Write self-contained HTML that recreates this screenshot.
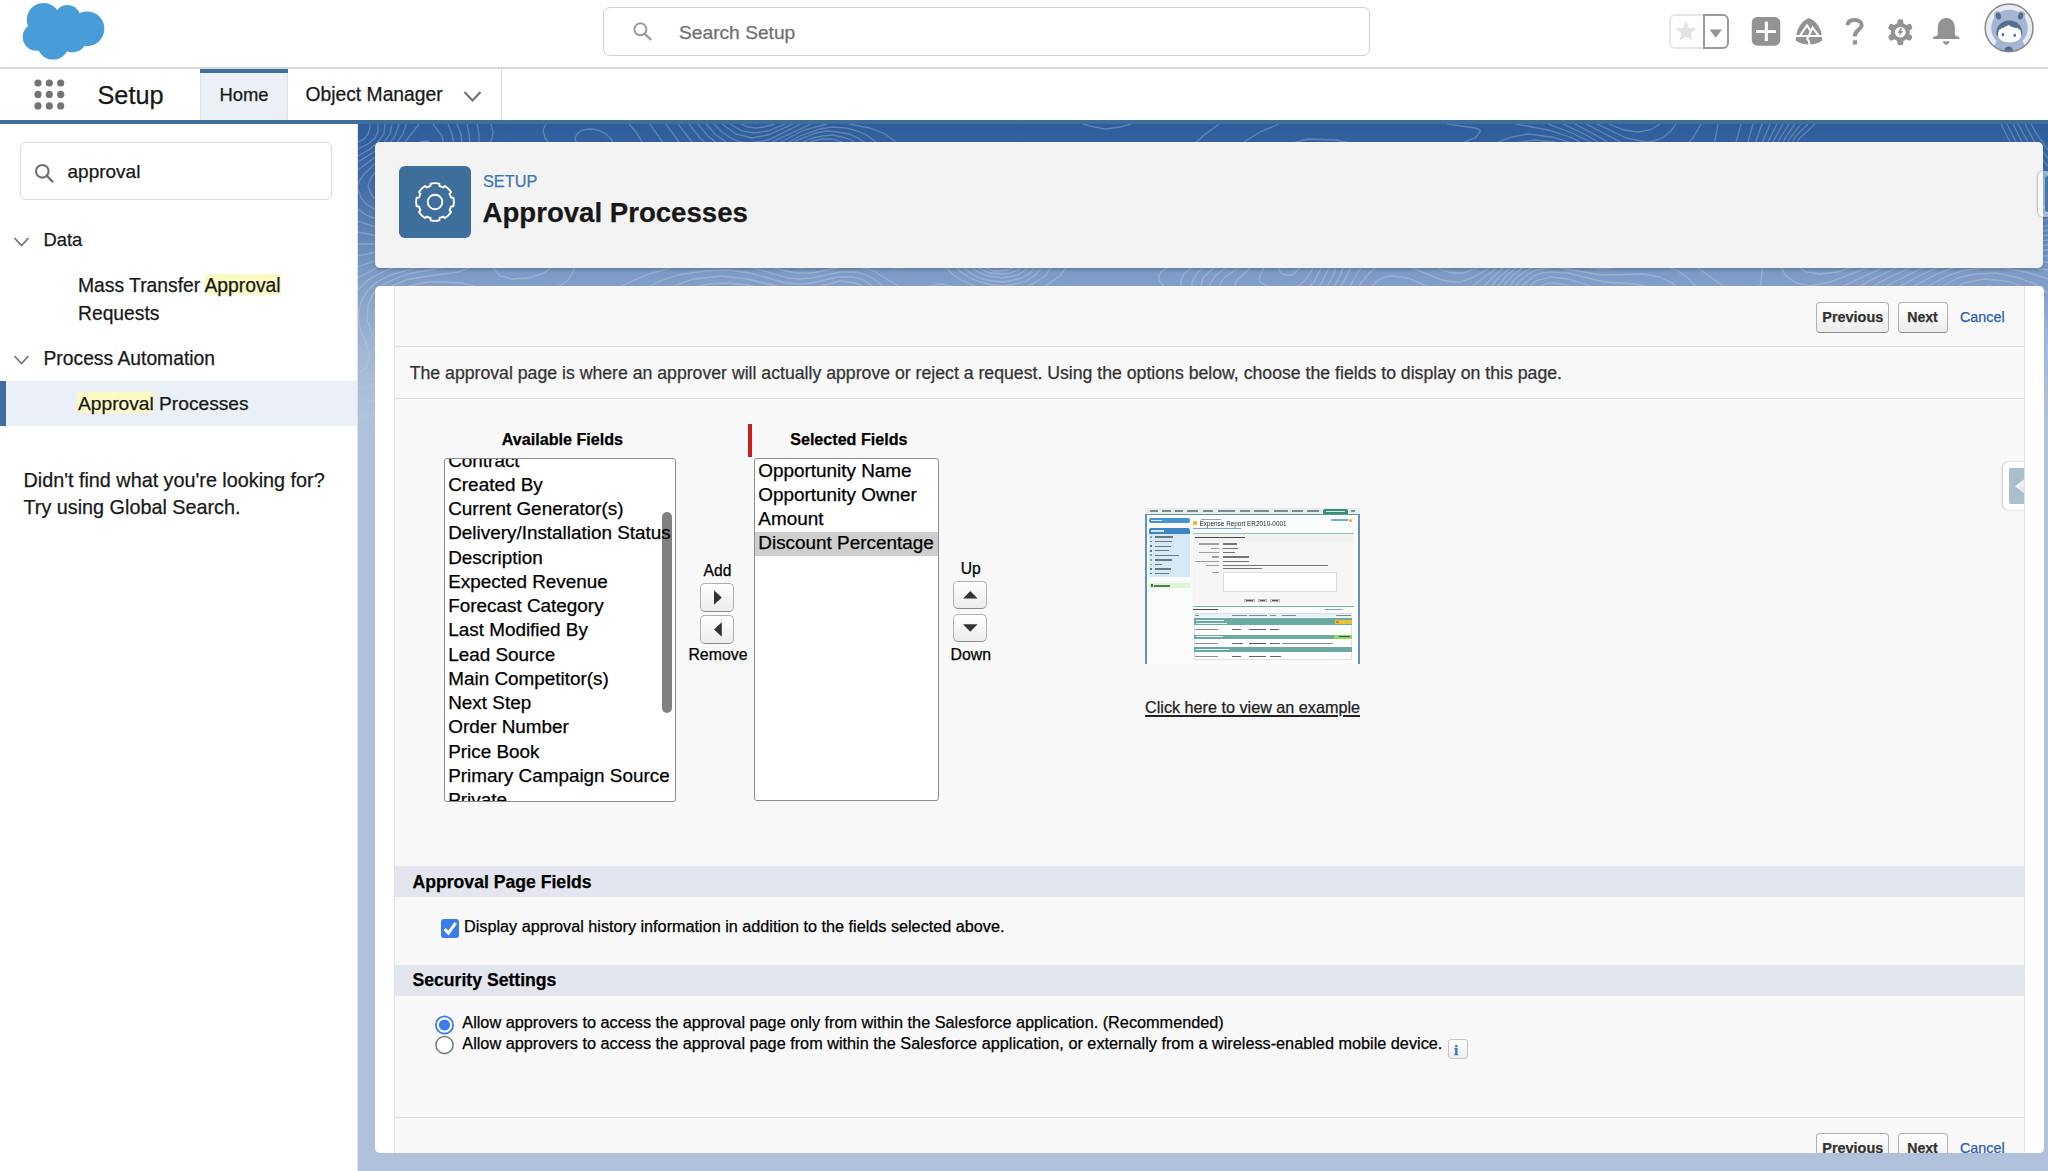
<!DOCTYPE html>
<html><head><meta charset="utf-8">
<style>
*{box-sizing:border-box;margin:0;padding:0}
html,body{width:2048px;height:1171px;overflow:hidden;background:#fff;font-family:"Liberation Sans",sans-serif;color:#181818}
.a{position:absolute}
.t{position:absolute;white-space:nowrap;line-height:1;-webkit-text-stroke:0.25px currentColor}
#hdr{left:0;top:0;width:2048px;height:69px;background:#fff;border-bottom:2px solid #d8d8d8}
#nav{left:0;top:69px;width:2048px;height:51px;background:#fff}
#navbar{left:0;top:120px;width:2048px;height:4px;background:#3d6e9c}
#side{left:0;top:124px;width:358px;height:1047px;background:#fff;border-right:1px solid #e1e1e1}
#bg{left:358px;top:124px;width:1690px;height:1047px;background:linear-gradient(180deg,#2e5d9b 0px,#3f6ba6 60px,#7d9bc6 150px,#a3b7d6 230px,#b0c1dc 290px,#b0c1dc 100%)}
#hcard{left:375px;top:142px;width:1668px;height:126px;background:#f3f3f3;border-radius:5px;box-shadow:0 2px 3px rgba(0,0,0,.18)}
#mcard{left:375px;top:286px;width:1669px;height:867px;background:#fff;border-radius:5px 5px 5px 5px;overflow:hidden}
#inner{left:19px;top:0;width:1631px;height:867px;background:#f8f8f8;border-left:1px solid #e3e3e3;border-right:1px solid #e3e3e3}
.hl{background:#fbf9c4}
.btn{position:absolute;border:1.3px solid #b0b0b0;border-bottom-color:#8a8a8a;border-radius:4px;background:linear-gradient(#fff,#ececec)}
.lbox{position:absolute;background:#fff;border:1.5px solid #8e8e8e;border-radius:3px;overflow:hidden}
.opt{position:absolute;left:3px;white-space:nowrap;font-size:18.9px;line-height:1;color:#000;-webkit-text-stroke:0.25px #000}
</style></head><body>

<!-- HEADER -->
<div id="hdr" class="a"></div>
<svg class="a" style="left:0;top:0" width="120" height="66" viewBox="0 0 120 66">
 <g fill="#489dd9">
  <circle cx="43.5" cy="19.7" r="16.8"/>
  <circle cx="67.4" cy="18.3" r="13.2"/>
  <circle cx="87.1" cy="28.7" r="17.3"/>
  <circle cx="36.4" cy="37" r="13.7"/>
  <circle cx="53" cy="43.6" r="16"/>
  <circle cx="72.2" cy="37.5" r="15"/>
  <rect x="36" y="22" width="52" height="24"/>
 </g>
</svg>
<div class="a" style="left:602.5px;top:7px;width:767px;height:48.5px;border:1.7px solid #d0d0d0;border-radius:7px;background:#fff"></div>
<svg class="a" style="left:630px;top:20px" width="26" height="24" viewBox="0 0 26 24"><circle cx="10.4" cy="9.3" r="6" fill="none" stroke="#9b9b9b" stroke-width="1.9"/><line x1="14.8" y1="13.8" x2="20.6" y2="19.3" stroke="#9b9b9b" stroke-width="2.3" stroke-linecap="round"/></svg>
<div class="t" style="left:679px;top:22.70px;font-size:19.2px;color:#6f6f6f">Search Setup</div>

<!-- NAV -->
<div id="nav" class="a"></div>
<div id="navbar" class="a"></div>

<!-- header icons -->
<div class="a" style="left:1669px;top:14px;width:35px;height:35px;border:2px solid #e6e6e6;border-right:none;border-radius:6px 0 0 6px;background:#fff"></div>
<div class="a" style="left:1703px;top:14px;width:26px;height:35px;border:2px solid #9a9a9a;border-radius:0 6px 6px 0;background:#fff"></div>
<svg class="a" style="left:1674px;top:19px" width="24" height="24" viewBox="0 0 24 24"><polygon fill="#e2e2e2" points="12,1.5 14.9,8.9 22.6,9.2 16.6,14.2 18.7,22 12,17.5 5.3,22 7.4,14.2 1.4,9.2 9.1,8.9"/></svg>
<svg class="a" style="left:1709px;top:29px" width="14" height="10" viewBox="0 0 14 10"><polygon fill="#939393" points="0.5,0.5 13,0.5 6.75,8.8"/></svg>
<svg class="a" style="left:1751px;top:16px" width="30" height="31" viewBox="0 0 30 31"><rect x="0.8" y="1" width="28.5" height="28.7" rx="5.5" fill="#939393"/><rect x="13.8" y="5.6" width="3.1" height="19.5" fill="#fff"/><rect x="5" y="14.1" width="19.9" height="2.9" fill="#fff"/></svg>
<svg class="a" style="left:1794px;top:17px" width="30" height="30" viewBox="0 0 30 30"><path fill="#939393" d="M14.9 1.1 C 21 3.5 27 9.5 28 20 L 28.2 23.5 C 25 26 20 27.4 14.9 27.4 C 9.8 27.4 5 26 1.8 23.5 L 2 20 C 3 9.5 9 3.5 14.9 1.1 Z"/><g fill="none" stroke="#fff" stroke-width="2"><path d="M6.2 18.2 L13 8.4 L16.8 14.4"/><path d="M15.2 18.2 L18.6 10.4 L24.2 18.2"/><path d="M0 19 H30"/><path d="M14.2 19.5 L13.3 22 L14.9 24.5 L15.7 28.5"/></g></svg>
<svg class="a" style="left:1844px;top:17px" width="22" height="30" viewBox="0 0 22 30"><path fill="none" stroke="#939393" stroke-width="4" d="M3.6 8.3 C 3.6 4.2 6.8 2.9 10.8 2.9 C 15 2.9 17.7 5.2 17.7 8.3 C 17.7 12.2 11 13.2 11 18.3 L 11 19.6"/><rect x="8.8" y="23.3" width="4.2" height="4.3" fill="#939393"/></svg>
<svg class="a" style="left:1886px;top:17px" width="29" height="30" viewBox="0 0 29 30"><g transform="translate(14.3,15.2)"><g fill="#939393">
 <circle r="9.4"/>
 <rect x="-3" y="-13" width="6" height="6" rx="2.2"/>
 <rect x="-3" y="-13" width="6" height="6" rx="2.2" transform="rotate(60)"/>
 <rect x="-3" y="-13" width="6" height="6" rx="2.2" transform="rotate(120)"/>
 <rect x="-3" y="-13" width="6" height="6" rx="2.2" transform="rotate(180)"/>
 <rect x="-3" y="-13" width="6" height="6" rx="2.2" transform="rotate(240)"/>
 <rect x="-3" y="-13" width="6" height="6" rx="2.2" transform="rotate(300)"/>
 </g><circle r="5.4" fill="#fff"/><path fill="#939393" d="M0.2 -3.9 L -2.7 0.9 L -0.4 0.9 L -1.3 4 L 3.1 -1.2 L 0.6 -1.2 L 1.9 -3.9 Z"/></g></svg>
<svg class="a" style="left:1931px;top:17px" width="30" height="30" viewBox="0 0 30 30"><path fill="#939393" d="M15.3 1 C 20.8 1 23.9 5.5 23.9 11 L 23.9 17 C 23.9 18.5 25.3 19.2 27.3 19.8 C 28.9 20.3 28.9 22 27.3 22 L 3 22 C 1.4 22 1.4 20.3 3 19.8 C 5 19.2 6.8 18.5 6.8 17 L 6.8 11 C 6.8 5.5 9.8 1 15.3 1 Z"/><path fill="#939393" d="M11.9 24.2 L 18.5 24.2 C 18 26.5 16.8 27.7 15.2 27.7 C 13.6 27.7 12.4 26.5 11.9 24.2 Z"/></svg>
<svg class="a" style="left:1983px;top:2px" width="52" height="52" viewBox="0 0 52 52">
 <defs><clipPath id="av"><circle cx="26.1" cy="25.9" r="23.6"/></clipPath></defs>
 <circle cx="26.1" cy="25.9" r="23.6" fill="#e8ebf1"/>
 <g clip-path="url(#av)">
  <circle cx="26.5" cy="26" r="18.3" fill="#a3b5d3"/>
  <path fill="#a3b5d3" d="M11 12 C 12 9.5 14 8.5 16 9.3 L 21 13 L 32 13 L 37 9.3 C 39 8.5 41 9.5 42 12 L 42 22 L 11 22 Z"/>
  <path fill="#a3b5d3" d="M14 38 L 39 38 L 46 52 L 7 52 Z"/>
  <ellipse cx="15.4" cy="14" rx="2.6" ry="3.6" fill="#566c91" transform="rotate(-12 15.4 14)"/>
  <ellipse cx="37.6" cy="14" rx="2.6" ry="3.6" fill="#566c91" transform="rotate(12 37.6 14)"/>
  <path fill="#566c91" d="M13.4 33.5 C 12.6 24 18.5 18.6 26.4 18.6 C 34.3 18.6 40 24 39.3 33.5 L 37 33.5 L 37 29 L 16 29 L 16 33.5 Z"/>
  <path fill="#fff" d="M15 32.5 C 15 37.5 19.8 40.4 26.6 40.4 C 33.4 40.4 38.3 37.5 38.3 32.5 C 38.3 30.5 37.7 29 36.8 27.6 C 35.5 27.8 35 26.5 34.5 25.3 C 33.8 26.5 33 26.8 32.2 26 C 30.5 24.8 28.5 24.3 26.5 24.4 C 27 23.6 26.6 23 26.2 22.8 C 25 23.4 23.6 24 22.2 24.6 C 21.5 25 20.8 25.5 20 26.2 C 19.6 26 19.2 25.8 18.8 25.6 C 18.6 26.8 17.4 27.6 16.2 27.8 C 15.5 29 15 30.6 15 32.5 Z"/>
  <ellipse cx="19.9" cy="32.7" rx="1.2" ry="1.8" fill="#566c91"/><ellipse cx="31.8" cy="33.2" rx="1.2" ry="1.8" fill="#566c91"/>
  <ellipse cx="25.6" cy="48.5" rx="4.4" ry="4" fill="#566c91"/>
 </g>
 <circle cx="26.1" cy="25.9" r="23.9" fill="none" stroke="#888" stroke-width="1.5"/>
</svg>

<!-- NAV content -->
<svg class="a" style="left:30px;top:75px" width="40" height="40" viewBox="0 0 40 40"><g fill="#747474">
 <circle cx="8" cy="8" r="3.6"/><circle cx="19.3" cy="8" r="3.6"/><circle cx="30.7" cy="8" r="3.6"/>
 <circle cx="8" cy="19.4" r="3.6"/><circle cx="19.3" cy="19.4" r="3.6"/><circle cx="30.7" cy="19.4" r="3.6"/>
 <circle cx="8" cy="30.9" r="3.6"/><circle cx="19.3" cy="30.9" r="3.6"/><circle cx="30.7" cy="30.9" r="3.6"/>
</g></svg>
<div class="t" style="left:97.5px;top:83.20px;font-size:25.3px;color:#181818">Setup</div>
<div class="a" style="left:200px;top:69px;width:88px;height:51px;background:#eaf0f5;border-left:1px solid #dfe3e8;border-right:1px solid #dfe3e8"></div>
<div class="a" style="left:200px;top:69px;width:88px;height:4px;background:#3d6e9c"></div>
<div class="t" style="left:219.4px;top:85.90px;font-size:18.4px;color:#181818">Home</div>
<div class="t" style="left:305.5px;top:85.00px;font-size:19.3px;color:#181818">Object Manager</div>
<svg class="a" style="left:462px;top:89px" width="21" height="15" viewBox="0 0 21 15"><polyline points="2.5,3 10.5,11.5 18.5,3" fill="none" stroke="#747474" stroke-width="2.2"/></svg>
<div class="a" style="left:501px;top:69px;width:1px;height:51px;background:#dddddd"></div>

<!-- SIDEBAR -->
<div id="side" class="a"></div>
<div class="a" style="left:20px;top:142px;width:312px;height:58px;border:1px solid #dcdcdc;border-radius:6px;background:#fff"></div>
<svg class="a" style="left:32px;top:161px" width="24" height="24" viewBox="0 0 24 24"><circle cx="10.3" cy="10.3" r="6.3" fill="none" stroke="#6f6f6f" stroke-width="2.1"/><line x1="14.8" y1="14.8" x2="20.5" y2="20.5" stroke="#6f6f6f" stroke-width="2.4" stroke-linecap="round"/></svg>
<div class="t" style="left:67.5px;top:162.20px;font-size:19px;color:#181818">approval</div>
<svg class="a" style="left:12px;top:234px" width="20" height="16" viewBox="0 0 20 16"><polyline points="2.5,4 9.5,11.5 16.5,4" fill="none" stroke="#747474" stroke-width="1.8"/></svg>
<div class="t" style="left:43.5px;top:230.90px;font-size:18.4px;color:#181818">Data</div>
<div class="a hl" style="left:204.8px;top:274.4px;width:76.4px;height:21.1px"></div>
<div class="t" style="left:78px;top:275.70px;font-size:19.3px;color:#181818">Mass Transfer Approval</div>
<div class="t" style="left:78px;top:303.50px;font-size:19.3px;color:#181818">Requests</div>
<svg class="a" style="left:12px;top:352px" width="20" height="16" viewBox="0 0 20 16"><polyline points="2.5,4 9.5,11.5 16.5,4" fill="none" stroke="#747474" stroke-width="1.8"/></svg>
<div class="t" style="left:43.5px;top:348.70px;font-size:19.3px;color:#181818">Process Automation</div>
<div class="a" style="left:0;top:381px;width:357px;height:45px;background:#eaf0f5"></div>
<div class="a" style="left:0;top:381px;width:6px;height:45px;background:#3d6e9c"></div>
<div class="a hl" style="left:77.3px;top:392px;width:76.5px;height:21.3px"></div>
<div class="t" style="left:78px;top:393.50px;font-size:19.2px;color:#181818">Approval Processes</div>
<div class="t" style="left:23.50px;top:470.80px;font-size:19.8px;color:#181818">Didn't find what you're looking for?</div>
<div class="t" style="left:23.50px;top:498.40px;font-size:19.8px;color:#181818">Try using Global Search.</div>

<!-- CONTENT BG -->
<div id="bg" class="a"></div>
<svg id="topo" class="a" style="left:358px;top:124px" width="1690" height="330" viewBox="0 0 1690 330">
<defs><linearGradient id="tg" x1="0" y1="0" x2="0" y2="1"><stop offset="0" stop-color="#fff" stop-opacity="1"/><stop offset="0.5" stop-color="#fff" stop-opacity="0.9"/><stop offset="1" stop-color="#fff" stop-opacity="0"/></linearGradient>
<mask id="tm"><rect width="1690" height="330" fill="url(#tg)"/></mask></defs>
<path mask="url(#tm)" fill="none" stroke="rgba(255,255,255,0.24)" stroke-width="1.3" d="M1457 0 1442 14 1433 28 1429 46 1430 64 1438 84 1452 101 1466 110 1484 113 1500 111 1544 100 1574 96 1656 91 1668 88 1676 84 1680 80 1683 74 1683 68 1682 62 1676 52 1655 24 1643 0M1210 204 1212 200 1212 196 1209 188 1202 182 1198 182 1194 183 1192 187 1192 192 1196 200 1204 206 1210 204M438 316 450 312 462 303 471 292 479 278 482 266 482 254 479 244 472 234 462 226 450 221 426 214 402 210 388 210 376 212 366 216 355 224 342 238 329 258 326 268 328 273 400 312 420 317 438 316M1223 320 1229 316 1234 308 1236 298 1236 288 1234 278 1230 269 1224 263 1216 260 1208 264 1203 272 1199 284 1199 296 1202 307 1208 316 1216 320 1223 320M1405 300 1409 296 1410 292 1409 288 1406 283 1402 280 1396 279 1388 282 1385 286 1385 290 1388 298 1396 302 1405 300M1450 0 1438 12 1429 28 1425 44 1426 60 1430 78 1440 96 1452 109 1466 117 1478 119 1492 119 1548 105 1582 99 1662 95 1672 93 1681 88 1687 82 1690 75M1690 66 1683 52 1660 22 1649 0M1220 326 1228 323 1234 317 1239 308 1241 298 1241 276 1231 240 1233 230 1238 210 1238 200 1233 188 1220 176 1205 168 1192 167 1186 169 1180 174 1178 180 1177 188 1180 204 1195 232 1198 242 1198 252 1193 280 1194 296 1197 308 1203 318 1212 325 1220 326M441 322 456 315 470 302 483 280 487 270 489 260 486 244 478 230 466 220 448 213 414 205 396 203 378 203 364 208 353 214 342 224 302 272 295 284 296 289 300 292 330 289 348 292 362 299 392 315 408 321 424 324 441 322M1405 314 1415 310 1423 302 1426 294 1424 284 1417 274 1408 267 1398 264 1386 265 1378 270 1372 277 1370 286 1371 296 1376 305 1384 311 1394 314 1405 314M1443 0 1432 14 1425 28 1421 44 1422 62 1427 82 1437 102 1448 115 1462 124 1474 126 1490 125 1550 109 1584 103 1664 99 1680 95 1690 88M1690 51 1666 22 1655 0M1224 330 1230 327 1236 322 1244 306 1247 288 1249 248 1252 237 1263 212 1264 198 1262 192 1257 186 1233 172 1208 161 1198 159 1190 159 1180 163 1172 171 1169 182 1169 196 1172 210 1185 246 1188 286 1191 304 1200 320 1206 326 1214 330M434 330 452 325 460 320 468 313 483 292 493 268 494 250 489 234 478 218 472 214 464 210 394 196 376 196 362 200 350 206 338 217 292 269 282 284 281 290 282 296 285 300 289 302 300 303 328 297 342 298 358 304 396 324 419 330M1408 322 1423 316 1435 306 1438 296 1435 284 1424 267 1410 256 1396 252 1388 252 1380 254 1368 263 1361 274 1359 286 1362 300 1370 312 1380 319 1394 323 1408 322M1437 0 1427 14 1420 30 1417 48 1418 66 1424 88 1434 109 1446 123 1458 131 1470 133 1484 133 1500 129 1546 115 1572 109 1604 105 1662 104 1678 100 1690 95M1690 42 1671 20 1660 0M1234 330 1241 322 1247 310 1256 272 1260 260 1266 250 1281 230 1288 216 1292 202 1292 192 1290 186 1286 181 1275 174 1242 165 1210 155 1192 153 1178 157 1168 166 1162 178 1161 194 1165 212 1176 252 1185 300 1194 318 1205 330M457 330 468 322 478 309 491 286 499 266 501 254 500 242 496 230 488 215 480 206 472 203 440 200 394 190 380 189 368 191 358 193 348 198 340 204 330 214 280 272 274 285 273 296 276 302 280 306 290 310 300 309 328 304 346 306 360 312 394 330M1414 328 1433 320 1443 314 1449 308 1451 304 1451 298 1446 284 1437 270 1428 259 1420 251 1410 245 1400 242 1390 241 1380 242 1370 246 1357 256 1350 270 1349 286 1354 304 1364 317 1378 326 1396 330 1414 328M111 330 98 328 87 330M1431 0 1421 16 1415 32 1413 50 1414 70 1420 94 1430 116 1440 130 1454 139 1468 141 1484 140 1548 119 1582 111 1608 108 1664 107 1678 105 1690 101M1690 34 1676 17 1667 0M1240 330 1249 316 1260 285 1266 273 1274 264 1298 246 1307 234 1311 224 1315 210 1315 198 1314 188 1311 180 1305 172 1298 166 1290 163 1278 160 1246 158 1210 149 1194 148 1184 149 1176 152 1164 162 1157 176 1155 194 1159 220 1178 292 1187 314 1199 330M470 330 478 320 488 303 502 274 507 258 508 248 506 236 492 203 486 196 480 193 442 194 396 185 378 183 364 185 352 188 340 194 330 202 276 268 268 282 266 294 267 300 271 306 276 311 282 314 296 315 326 310 340 311 356 316 380 330M1429 330 1465 314 1470 308 1469 300 1440 260 1424 243 1416 237 1406 232 1388 228 1370 231 1354 238 1342 249 1336 262 1337 282 1344 302 1355 318 1371 330M125 330 112 325 98 323 84 325 71 330M1425 0 1416 16 1410 34 1408 54 1410 74 1416 102 1426 126 1436 140 1448 148 1462 150 1480 148 1548 124 1584 115 1610 112 1666 111 1690 106M1690 26 1680 12 1673 0M1452 330 1472 325 1481 320 1487 312 1486 304 1481 294 1458 271 1432 238 1418 225 1408 219 1398 216 1358 213 1348 209 1341 202 1330 178 1323 168 1314 159 1302 153 1286 150 1244 151 1196 143 1178 146 1170 150 1162 157 1156 164 1152 172 1149 182 1148 194 1152 226 1164 272 1179 308 1186 320 1194 330M480 330 509 272 515 252 515 242 513 232 497 192 491 186 484 183 476 183 454 188 442 188 394 179 376 177 360 178 346 183 334 189 323 198 272 264 264 278 261 292 261 300 265 308 271 314 278 317 294 320 324 316 336 316 350 320 368 330M1245 330 1253 318 1266 290 1272 282 1284 274 1302 269 1312 271 1319 276 1342 314 1359 330M134 330 116 321 96 318 76 321 59 330M1419 0 1410 18 1405 36 1403 54 1404 76 1411 110 1419 136 1428 152 1438 159 1452 162 1472 158 1545 130 1584 119 1612 116 1668 115 1690 111M1484 330 1492 324 1497 316 1497 306 1494 297 1487 288 1462 263 1430 219 1416 205 1404 199 1376 193 1364 188 1354 180 1330 154 1320 147 1310 143 1290 140 1244 145 1196 139 1184 141 1174 144 1166 148 1158 154 1152 162 1146 172 1143 184 1142 196 1145 230 1153 268 1169 300 1189 330M488 330 502 298 520 262 524 248 524 240 521 230 508 196 502 185 495 178 486 175 478 175 456 181 442 183 428 181 392 172 374 171 358 172 342 176 328 183 316 193 306 205 267 260 259 276 255 290 256 300 259 308 266 316 274 321 292 324 332 321 344 324 357 330M1250 330 1272 295 1282 288 1294 285 1304 286 1314 292 1337 320 1348 330M142 330 132 322 122 317 110 314 96 312 84 313 70 317 58 322 47 330M1412 0 1403 22 1398 48 1398 74 1404 148 1403 160 1398 166 1388 169 1374 167 1362 160 1340 144 1328 137 1316 133 1302 131 1288 132 1246 139 1200 136 1184 137 1174 140 1164 144 1154 152 1147 160 1138 178 1134 198 1135 222 1140 254 1144 270 1151 284 1184 330M1498 330 1502 324 1505 316 1506 308 1504 300 1496 286 1466 256 1451 232 1443 214 1439 200 1439 190 1443 184 1455 176 1524 144 1548 134 1573 126 1606 120 1668 119 1690 116M497 330 507 300 530 260 535 246 534 238 531 228 507 180 498 172 488 168 478 169 454 176 440 177 426 175 392 167 370 165 352 166 334 172 320 179 308 189 297 202 262 257 255 272 250 286 250 298 253 308 259 316 268 322 286 327 326 326 336 327 345 330M846 222 847 218 844 214 836 212 830 214 831 218 835 222 840 223 846 222M1256 330 1274 306 1282 300 1292 298 1302 300 1310 304 1336 330M150 330 140 321 126 313 110 308 94 306 78 307 62 312 46 320 33 330M383 0 390 3 398 4 406 3 417 0M1404 0 1397 20 1392 40 1390 60 1390 102 1388 117 1384 129 1378 135 1372 137 1364 137 1330 124 1310 121 1292 123 1246 133 1188 133 1174 136 1161 142 1150 150 1140 162 1131 180 1125 202 1125 226 1129 254 1135 272 1142 286 1178 330M169 116 171 114 170 110 168 108 165 108 163 110 163 114 166 116 169 116M1507 330 1511 322 1513 312 1512 302 1509 294 1500 280 1472 250 1465 238 1459 224 1457 214 1456 204 1459 196 1464 188 1481 174 1513 156 1542 142 1575 130 1592 126 1610 123 1670 123 1690 121M506 330 508 314 514 298 522 284 544 256 548 248 549 242 548 236 545 228 511 176 502 167 490 163 478 163 454 170 440 171 426 170 390 161 368 159 350 160 332 164 316 171 304 180 296 188 287 200 255 256 249 270 245 282 244 294 246 304 251 314 258 321 268 327 280 330M70 204 80 202 88 196 92 188 90 180 82 175 70 172 58 174 50 178 45 186 45 192 48 196 58 202 70 204M851 238 860 234 866 228 868 220 864 214 852 206 838 201 826 200 816 204 812 210 812 216 814 222 819 228 826 233 834 237 842 238 851 238M157 330 144 317 128 307 110 301 92 298 74 300 54 306 29 318 12 330M1264 330 1278 315 1284 312 1290 311 1296 312 1304 315 1324 330M372 0 384 7 396 9 410 7 427 0M1251 0 1266 6 1280 8 1292 6 1302 0M1395 0 1386 32 1377 92 1372 104 1366 110 1354 112 1326 109 1310 110 1294 113 1262 124 1246 128 1230 130 1196 129 1178 132 1164 137 1152 144 1140 154 1129 168 1117 190 1111 208 1110 226 1115 250 1122 270 1131 286 1142 300 1172 330M613 96 625 90 626 86 625 84 618 81 610 81 602 84 597 90 598 94 600 96 606 97 613 96M172 138 182 134 188 128 191 120 191 112 187 102 180 95 172 91 162 90 153 94 147 102 143 112 144 122 148 130 154 136 162 138 172 138M1515 330 1518 322 1519 312 1519 302 1516 292 1507 278 1481 248 1475 238 1471 226 1469 216 1470 206 1473 198 1479 190 1497 174 1522 158 1551 144 1580 133 1598 129 1616 127 1672 127 1690 126M516 330 516 320 517 310 520 301 525 292 536 279 565 256 574 246 575 236 570 228 538 201 512 168 506 163 498 159 482 157 452 165 438 166 426 164 390 155 364 152 336 155 310 164 290 178 282 187 275 198 245 260 241 274 238 288 240 302 245 314 254 324 266 330M78 214 94 208 104 198 108 186 107 180 104 174 98 170 90 166 70 164 51 168 38 176 35 182 34 190 36 197 42 204 50 210 58 213 68 214 78 214M851 250 865 246 876 237 880 230 881 224 880 218 877 214 870 208 863 204 834 194 818 193 812 195 806 198 800 206 799 214 802 222 808 231 818 240 828 246 840 249 851 250M165 330 153 316 136 303 116 293 98 289 84 289 68 291 0 312M1275 330 1282 326 1290 325 1298 326 1306 330M364 0 378 10 394 14 410 11 435 0M1239 0 1268 14 1288 18 1296 17 1304 14 1312 8 1318 0M1383 0 1377 22 1366 72 1360 83 1352 89 1344 92 1308 98 1263 118 1246 123 1230 125 1190 126 1166 132 1145 144 1134 154 1110 179 1102 185 1096 187 1090 188 1082 186 1054 172 1040 168 1032 169 1026 171 1020 176 1015 182 1010 193 1009 204 1011 214 1018 224 1026 229 1036 233 1074 237 1086 242 1096 253 1113 278 1124 292 1165 330M601 104 617 100 635 92 640 86 638 80 630 74 618 72 606 73 595 78 587 86 585 92 585 96 587 100 590 103 601 104M171 154 186 149 198 140 203 128 204 116 199 102 189 90 176 83 162 81 149 86 138 98 133 114 133 132 136 145 142 152 154 155 171 154M1523 330 1526 310 1522 290 1514 275 1490 244 1483 226 1482 216 1483 208 1487 198 1493 190 1508 176 1532 160 1560 146 1586 136 1604 132 1622 130 1690 132M529 330 526 318 527 306 534 294 544 285 554 279 564 276 600 269 636 257 674 250 686 246 699 238 708 228 710 218 707 208 701 202 694 198 678 194 642 196 586 202 572 202 560 200 550 196 540 189 512 160 504 155 494 153 480 153 454 159 442 160 428 159 392 149 372 146 346 147 320 151 305 156 292 162 281 170 270 180 258 200 241 246 232 276 231 288 232 298 235 308 239 316 247 324 256 330M89 224 98 220 107 214 115 206 121 198 125 188 126 180 125 172 122 166 116 162 104 159 86 158 70 158 46 163 37 168 30 174 26 182 25 192 29 202 38 212 50 220 64 225 76 226 89 224M857 262 866 259 874 254 886 241 890 232 891 224 890 218 887 212 880 206 871 202 826 187 808 187 800 189 793 194 787 202 786 212 788 222 797 234 812 247 828 257 842 262 857 262M173 330 162 314 144 297 120 283 100 276 88 275 74 276 26 290 0 294M356 0 364 8 373 14 382 18 392 19 410 16 443 0M1228 0 1276 25 1290 30 1302 32 1314 30 1325 24 1335 14 1343 0M1360 0 1352 42 1348 52 1343 60 1334 68 1262 112 1250 117 1236 121 1188 124 1166 129 1144 140 1112 164 1100 169 1092 170 1084 169 1050 154 1034 152 1026 153 1018 158 1005 174 997 192 995 208 999 224 1008 237 1016 244 1026 249 1064 258 1080 265 1092 274 1124 304 1157 330M595 110 622 102 646 92 653 86 654 82 653 78 648 72 642 69 626 64 608 64 592 69 584 75 578 82 575 88 574 96 576 104 580 108 586 110 595 110M182 330 175 314 164 300 146 282 113 254 108 246 109 242 112 236 131 214 152 184 164 176 200 163 210 156 215 148 218 138 218 128 215 116 210 104 203 94 195 86 186 79 176 75 166 73 156 74 148 78 140 84 130 99 119 134 116 140 111 144 100 148 64 153 48 156 34 162 24 170 19 178 17 186 17 194 21 204 34 220 61 242 64 246 65 250 59 258 42 268 22 275 0 279M1530 330 1532 308 1529 288 1521 272 1501 242 1495 226 1495 216 1497 208 1501 198 1507 190 1522 176 1542 162 1569 148 1592 139 1610 136 1628 134 1690 138M634 330 625 324 616 316 612 310 612 304 617 294 626 284 634 277 646 271 662 265 689 260 702 256 746 230 754 226 760 226 766 227 774 231 816 262 832 272 846 277 860 277 868 274 876 269 890 252 899 232 900 224 899 216 894 208 882 201 826 182 810 178 800 178 792 179 766 192 758 193 748 190 726 174 712 171 656 180 636 180 598 177 560 183 552 182 544 178 516 155 508 151 498 148 482 148 454 154 442 155 430 154 396 144 374 140 346 139 320 142 290 150 264 162 248 174 242 182 239 190 234 206 224 260 222 288 224 302 229 312 236 322 247 330M557 330 550 327 544 322 541 316 540 310 542 304 548 298 556 294 564 293 574 294 582 297 589 302 594 308 593 314 590 320 583 326 574 330M348 0 357 10 368 18 378 23 390 25 400 24 410 20 453 0M725 0 736 3 748 5 762 3 773 0M1217 0 1243 14 1275 34 1289 44 1296 52 1299 62 1296 72 1288 84 1275 96 1258 108 1240 115 1224 118 1186 121 1164 126 1147 134 1116 153 1102 158 1094 158 1084 156 1042 139 1032 138 1024 139 1014 146 1002 160 990 182 984 198 984 212 988 228 996 244 1008 256 1022 264 1060 274 1078 281 1094 291 1147 330M587 118 634 101 682 88 687 84 687 80 681 72 672 64 660 57 646 52 634 49 620 48 606 49 594 53 582 59 572 68 564 80 561 92 562 104 568 115 576 119 587 118M657 330 640 320 635 314 632 308 631 302 632 296 634 290 640 284 648 278 660 273 708 263 738 250 750 246 766 245 784 251 804 265 834 292 844 297 854 297 866 293 876 287 886 277 898 258 907 236 909 222 908 216 905 210 899 204 890 199 850 186 826 176 807 164 801 156 801 152 803 148 826 132 832 126 834 120 831 114 820 111 806 112 794 118 776 132 768 134 756 130 730 115 722 114 718 119 711 140 702 152 684 164 662 171 646 172 630 171 584 160 576 161 560 166 552 166 540 162 514 146 498 142 484 143 454 149 440 149 428 147 386 135 368 133 346 132 314 134 266 141 252 141 244 138 238 132 216 98 199 80 188 73 178 69 168 67 158 67 144 72 132 84 123 98 111 126 102 137 88 143 54 149 39 154 26 160 15 170 10 182 9 196 14 210 31 236 32 246 29 252 21 258 12 262 0 265M1538 330 1540 308 1536 286 1530 269 1513 238 1509 224 1509 214 1511 206 1521 190 1536 176 1556 162 1579 150 1600 142 1618 139 1636 139 1690 146M195 330 193 316 189 302 170 258 165 244 166 236 168 230 172 226 178 223 182 223 186 226 192 236 196 251 203 288 210 304 220 318 235 330M340 0 350 12 362 22 375 28 388 30 406 27 446 6 469 0M491 0 512 4 527 10 538 18 546 30 549 40 550 52 546 86 546 100 553 132 552 138 548 142 544 144 538 144 516 138 500 136 486 137 456 143 442 144 428 141 392 130 366 125 334 124 280 125 264 124 254 121 244 115 214 84 194 69 174 61 164 60 156 60 142 66 130 77 120 91 105 120 96 130 82 137 32 151 19 158 10 166 3 178 0 192 2 204 11 228 11 236 8 244 0 249M846 330 880 304 893 290 900 277 908 258 916 236 918 224 918 216 915 210 906 201 894 195 862 186 845 180 831 172 823 162 823 156 826 150 851 128 856 122 857 114 855 106 850 98 829 78 822 70 818 60 819 48 824 36 832 24 845 12 861 0M1205 0 1228 11 1250 24 1268 38 1278 50 1283 60 1282 72 1276 84 1265 96 1252 105 1238 111 1222 115 1184 118 1168 122 1150 129 1118 145 1104 149 1094 149 1084 146 1052 130 1040 125 1030 124 1022 126 1010 134 1000 148 981 182 974 202 973 216 978 234 990 256 1002 270 1018 278 1056 286 1076 293 1098 305 1135 330M652 166 628 165 616 162 603 156 594 150 587 142 585 136 586 130 591 124 603 116 618 109 634 104 660 100 670 101 680 105 688 111 694 120 696 132 694 142 687 152 678 158 666 164 652 166M1547 330 1547 304 1545 282 1539 264 1528 236 1525 222 1527 206 1537 190 1551 176 1570 162 1589 152 1607 146 1626 144 1646 144 1668 148 1690 155M675 330 654 322 646 317 641 310 639 304 640 296 643 290 648 284 656 279 668 275 712 269 744 258 760 255 772 257 784 262 796 270 808 282 815 294 820 306 821 320 819 330M331 0 342 14 355 26 368 33 382 36 392 36 404 33 442 12 462 5 474 3 488 4 500 7 510 12 518 18 525 26 529 36 532 48 533 62 532 82 530 108 526 118 522 123 514 126 464 137 448 138 432 136 394 123 370 118 336 114 272 111 260 108 248 102 210 72 192 61 174 54 158 53 144 58 130 69 118 84 100 114 88 126 74 133 40 142 24 148 10 156 0 166M870 330 896 308 906 294 928 230 930 216 924 206 910 196 896 191 862 183 847 176 837 168 834 164 834 158 840 148 864 129 870 118 871 110 870 102 860 74 858 64 859 52 863 42 872 30 886 18 902 8 921 0M1190 0 1214 9 1234 19 1252 32 1265 46 1271 58 1272 70 1268 82 1258 94 1247 102 1233 108 1170 119 1154 124 1120 139 1106 142 1096 141 1084 137 1038 112 1028 110 1020 111 1010 117 1002 127 966 194 961 208 961 220 967 236 983 270 989 278 995 284 1010 291 1050 296 1070 302 1094 312 1124 330M658 160 646 162 634 161 622 158 612 154 603 148 597 142 595 134 596 128 601 122 609 116 632 107 654 104 664 105 672 108 680 114 684 120 687 128 686 138 682 146 676 152 668 157 658 160M1557 330 1555 272 1545 230 1544 218 1547 202 1557 186 1571 172 1588 160 1602 153 1618 150 1638 149 1658 153 1677 160 1690 169M712 330 678 326 658 320 651 314 646 306 645 298 648 292 658 283 674 277 718 273 752 264 770 266 780 270 789 276 797 284 802 294 804 304 803 314 800 322 794 330M320 0 334 18 348 32 364 41 378 44 390 43 400 40 440 16 458 9 468 7 480 8 491 10 500 14 509 20 515 28 520 38 523 50 524 64 522 80 519 96 515 108 505 118 488 125 460 132 440 131 428 128 394 115 372 109 330 103 278 98 262 95 244 87 208 63 190 53 172 46 158 45 144 50 130 60 118 75 96 109 84 120 68 129 20 143 0 154M1158 0 1190 6 1212 13 1232 23 1248 36 1260 50 1264 64 1261 78 1253 90 1242 99 1228 105 1170 116 1124 132 1108 135 1096 134 1082 128 1034 95 1024 92 1016 93 1008 98 1000 109 981 154 968 176 954 194 944 200 936 200 906 188 866 180 852 174 845 168 843 162 845 154 851 148 870 134 879 122 882 108 881 76 883 60 891 44 904 32 926 21 950 15 978 16 1024 26 1042 27 1101 20 1117 14 1122 8 1122 6 1117 4 1089 0M656 156 646 158 634 157 624 155 614 150 606 144 602 138 601 132 603 126 609 120 615 116 634 109 652 107 660 108 668 111 674 116 679 122 680 128 680 136 678 142 672 149 664 154 656 156M1571 330 1568 308 1572 258 1565 220 1564 208 1566 198 1571 188 1579 178 1588 170 1606 159 1626 155 1648 157 1658 160 1668 166 1679 176 1686 190 1688 204 1690 237M889 330 909 316 919 306 923 296 927 270 932 256 938 245 942 242 946 240 952 243 958 250 964 262 974 291 978 297 984 302 998 306 1038 306 1060 309 1084 316 1111 330M740 330 720 325 686 324 668 320 660 316 653 310 650 304 651 296 655 290 660 286 676 280 690 278 722 279 754 272 768 274 777 278 784 284 790 292 792 302 792 310 788 318 782 324 772 330M308 0 326 25 340 40 356 50 372 55 384 54 396 50 437 22 454 14 464 12 474 11 484 13 493 16 500 21 507 28 512 38 515 48 516 60 515 74 513 88 508 100 499 112 485 120 464 126 444 126 426 120 384 101 360 93 328 87 276 84 256 80 238 73 186 43 170 37 158 36 144 40 130 52 118 66 93 102 78 117 62 124 19 136 0 143M1118 128 1104 129 1092 125 1078 117 1063 104 1049 88 1040 74 1039 64 1044 54 1055 46 1070 39 1119 26 1154 13 1170 10 1194 13 1217 20 1236 32 1245 40 1251 48 1256 62 1256 74 1249 86 1238 96 1220 104 1170 113 1118 128M942 188 928 188 868 176 859 172 854 168 852 164 852 160 857 152 878 136 886 126 890 114 898 75 903 64 910 55 920 46 934 40 948 37 962 37 978 42 990 50 996 60 997 70 982 130 975 152 968 164 960 176 950 185 942 188M644 154 626 151 612 143 608 138 606 132 608 126 611 122 626 113 644 109 660 112 670 118 674 124 675 130 674 136 671 142 666 147 660 151 644 154M1590 330 1585 320 1584 306 1587 294 1594 270 1595 258 1593 246 1583 216 1582 206 1583 198 1589 184 1601 172 1614 165 1630 162 1644 164 1658 171 1667 180 1673 194 1673 212 1669 244 1668 256 1671 268 1682 294 1684 306 1682 312 1678 318 1672 324 1663 330M762 322 750 323 724 319 692 321 676 319 666 316 658 310 655 304 655 298 658 292 663 288 670 284 680 282 694 281 724 284 750 281 762 281 770 284 776 290 780 296 781 302 780 308 776 315 770 319 762 322M988 330 1001 324 1014 320 1028 317 1042 316 1068 320 1096 330M0 18 6 15 10 10 12 4 12 0M292 0 307 22 318 46 318 56 315 60 310 63 296 67 280 69 266 69 252 67 230 58 174 27 162 23 154 23 144 28 132 39 92 95 76 110 66 116 52 121 0 132M464 120 454 121 444 120 422 111 405 100 393 90 387 82 385 76 388 70 393 64 434 28 454 17 464 15 474 15 490 20 498 26 502 32 506 40 509 50 510 70 505 90 496 105 482 115 464 120M1126 122 1112 123 1098 121 1084 113 1072 102 1062 88 1057 74 1059 64 1066 54 1076 47 1092 41 1158 19 1176 16 1196 18 1216 25 1232 35 1244 48 1249 60 1249 72 1243 84 1232 94 1214 101 1170 110 1126 122M938 180 924 180 878 173 865 168 862 162 863 158 866 154 884 141 892 132 897 122 907 92 916 77 922 71 930 65 938 63 948 62 956 64 962 67 971 78 975 96 976 120 972 142 963 160 952 173 946 177 938 180M648 150 632 149 618 143 613 138 611 134 612 128 614 124 625 116 640 112 654 113 664 118 668 122 670 128 668 138 660 146 648 150M1634 244 1624 243 1614 235 1604 221 1599 206 1600 194 1606 183 1616 176 1628 172 1640 174 1650 179 1656 188 1659 198 1658 212 1653 226 1644 238 1634 244M704 316 686 318 670 314 664 310 661 306 659 302 660 296 666 290 672 287 682 285 692 284 704 286 730 293 756 292 762 295 765 300 764 306 756 311 730 310 704 316M1628 318 1622 318 1618 316 1614 312 1614 306 1616 300 1620 295 1626 291 1632 290 1636 292 1640 296 1642 300 1643 306 1638 314 1628 318M1026 330 1048 327 1073 330M0 25 10 20 17 14 20 7 20 0M133 0 135 8 134 14 128 30 98 78 80 99 66 109 48 116 22 120 0 120M271 0 278 8 284 18 288 28 288 36 284 44 278 49 270 52 258 53 246 52 232 47 217 40 202 30 193 22 187 14 185 6 188 0M466 114 456 115 446 114 436 111 426 105 416 98 409 90 405 82 403 74 405 66 411 56 421 44 432 34 442 27 452 22 462 19 470 19 484 22 496 32 503 46 504 64 501 82 493 98 482 108 466 114M1122 118 1108 117 1094 112 1082 102 1073 90 1069 78 1070 68 1076 58 1086 50 1104 43 1152 27 1168 23 1182 21 1200 24 1216 30 1229 38 1239 50 1243 62 1243 72 1236 84 1226 92 1206 100 1122 118M936 172 920 173 888 168 879 164 877 160 879 156 892 144 898 137 912 106 919 96 930 87 942 85 952 88 961 98 966 112 967 128 963 144 956 158 946 168 936 172M650 146 636 147 623 142 616 134 617 126 624 120 636 115 648 115 658 118 663 122 665 126 665 134 659 142 650 146M1632 207 1626 206 1624 202 1624 197 1628 193 1634 194 1636 198 1636 203 1632 207M696 314 682 314 670 310 664 304 664 300 665 296 674 290 688 287 704 290 715 296 717 302 715 306 708 310 696 314M0 32 12 25 20 18 26 10 27 0M119 0 121 10 121 18 115 38 97 70 88 83 78 93 62 104 42 110 20 112 0 108M250 31 244 32 238 31 226 26 218 18 217 14 219 10 224 6 232 5 240 6 248 10 254 16 256 22 254 28 250 31M466 108 458 109 448 108 440 105 430 100 423 94 417 86 415 80 414 72 415 64 419 56 433 38 450 27 458 24 468 23 481 26 491 34 497 46 499 62 497 78 490 92 480 102 466 108M1134 112 1120 113 1108 111 1097 106 1087 98 1081 88 1078 76 1080 66 1087 58 1100 50 1118 43 1158 30 1178 26 1194 27 1210 32 1224 40 1232 50 1237 62 1236 72 1230 82 1222 89 1202 97 1134 112M932 164 920 165 909 162 902 158 901 154 920 114 930 105 940 102 948 106 954 113 957 122 958 134 955 144 949 154 942 161 932 164M650 142 638 144 626 140 621 134 620 130 621 126 628 121 636 118 646 117 654 120 660 126 660 132 657 138 650 142M696 310 686 311 676 309 670 304 670 298 674 294 682 291 692 291 700 293 706 298 707 302 704 306 696 310M0 38 16 28 25 20 32 10 34 0M109 0 111 10 112 20 107 40 94 66 85 78 76 87 60 98 40 104 18 103 0 97M466 102 458 103 450 102 436 96 425 84 423 78 422 70 423 62 426 54 437 40 452 30 466 27 478 30 486 36 492 47 494 60 492 74 486 88 478 96 466 102M1134 108 1120 108 1110 106 1099 100 1091 92 1087 82 1087 72 1091 64 1100 56 1116 48 1142 39 1164 33 1180 31 1194 31 1208 36 1220 44 1227 52 1231 62 1230 72 1225 80 1216 87 1194 96 1134 108M642 140 632 138 626 134 626 128 629 124 634 121 642 120 650 122 654 126 655 130 654 134 649 138 642 140M934 151 928 151 924 150 921 146 921 142 923 134 928 126 932 123 938 122 942 124 944 127 945 136 942 144 934 151M692 306 681 306 678 304 676 300 678 297 682 295 693 296 696 298 697 302 692 306M0 46 20 31 30 22 37 12 41 0M99 0 103 10 104 20 101 40 89 64 74 82 56 93 36 97 26 96 16 94 8 91 0 85M464 96 452 96 439 90 431 80 429 68 432 54 442 42 454 34 466 32 476 35 484 42 488 52 489 62 487 74 482 84 474 92 464 96M1132 104 1120 103 1110 100 1102 94 1096 86 1094 78 1096 70 1102 62 1110 56 1126 49 1148 41 1166 37 1180 35 1194 36 1206 40 1215 46 1221 54 1224 64 1223 72 1217 80 1209 86 1198 91 1182 95 1150 102 1132 104M644 134 635 134 633 132 633 128 638 125 646 126 648 130 644 134M0 61 2 56 6 50 38 20 45 10 48 0M90 0 94 10 96 20 96 30 94 40 89 52 84 62 76 72 68 79 58 85 48 88 38 90 28 89 18 86 8 80 3 74 0 66M466 88 456 90 446 86 438 78 435 68 437 58 443 48 452 41 462 37 470 38 476 42 481 48 483 58 483 68 480 76 474 84 466 88M1150 98 1128 99 1120 97 1113 94 1106 88 1103 82 1103 74 1106 68 1114 60 1128 52 1150 45 1170 40 1184 40 1196 42 1206 46 1214 54 1217 60 1217 68 1213 76 1206 82 1187 90 1150 98M75 0 84 12 88 28 86 44 78 60 66 73 52 80 36 82 22 78 16 74 12 68 10 62 13 54 19 46 44 22 61 0M466 80 458 82 452 80 446 75 443 68 443 60 448 52 454 46 460 44 466 44 472 48 475 52 477 58 477 66 474 72 466 80M1150 94 1130 94 1118 89 1114 85 1112 80 1112 74 1114 68 1124 60 1136 54 1153 48 1170 45 1182 44 1192 46 1201 50 1207 56 1210 62 1210 68 1206 74 1200 80 1180 88 1150 94M52 72 40 74 30 71 25 68 23 64 22 56 30 44 52 24 62 18 70 17 76 22 78 28 79 36 77 46 73 54 67 62 60 68 52 72M1160 88 1142 90 1130 87 1125 84 1122 80 1122 72 1126 66 1135 60 1149 54 1164 50 1184 50 1194 54 1199 58 1201 62 1201 68 1195 76 1182 83 1160 88M462 69 456 68 454 64 456 58 460 55 464 56 467 60 466 65 462 69M48 62 42 62 38 60 36 56 38 50 43 44 50 38 56 35 62 34 64 36 66 40 64 50 58 58 48 62M1162 82 1150 83 1140 82 1134 78 1133 72 1141 64 1160 57 1178 56 1188 61 1190 64 1190 68 1185 74 1176 79 1162 82"/></svg>


<!-- HEADER CARD -->
<div id="hcard" class="a"></div>
<div class="a" style="left:399px;top:166px;width:72px;height:72px;background:#3e6f9c;border-radius:6px"></div>
<svg class="a" style="left:411px;top:177.5px" width="48" height="48" viewBox="-24 -24 48 48">
 <path fill="none" stroke="#fff" stroke-width="1.9" stroke-linejoin="round" d="M-4.50 -15.98 L-4.30 -18.40 A18.9 18.9 0 0 1 4.30 -18.40 L4.50 -15.98 A16.6 16.6 0 0 1 8.12 -14.48 L9.97 -16.05 A18.9 18.9 0 0 1 16.05 -9.97 L14.48 -8.12 A16.6 16.6 0 0 1 15.98 -4.50 L18.40 -4.30 A18.9 18.9 0 0 1 18.40 4.30 L15.98 4.50 A16.6 16.6 0 0 1 14.48 8.12 L16.05 9.97 A18.9 18.9 0 0 1 9.97 16.05 L8.12 14.48 A16.6 16.6 0 0 1 4.50 15.98 L4.30 18.40 A18.9 18.9 0 0 1 -4.30 18.40 L-4.50 15.98 A16.6 16.6 0 0 1 -8.12 14.48 L-9.97 16.05 A18.9 18.9 0 0 1 -16.05 9.97 L-14.48 8.12 A16.6 16.6 0 0 1 -15.98 4.50 L-18.40 4.30 A18.9 18.9 0 0 1 -18.40 -4.30 L-15.98 -4.50 A16.6 16.6 0 0 1 -14.48 -8.12 L-16.05 -9.97 A18.9 18.9 0 0 1 -9.97 -16.05 L-8.12 -14.48 A16.6 16.6 0 0 1 -4.50 -15.98Z"/>
 <circle r="7.3" fill="none" stroke="#fff" stroke-width="1.9"/>
</svg>
<div class="t" style="left:483px;top:172.90px;font-size:16.3px;color:#3a78b5">SETUP</div>
<div class="t" style="left:482.5px;top:198.94px;font-size:27.6px;font-weight:700;color:#181818">Approval Processes</div>


<!-- right edge tabs -->
<div class="a" style="left:2037.5px;top:170.5px;width:20px;height:46px;border-radius:6px;background:rgba(255,255,255,0.45);box-shadow:-1px 0 2px rgba(0,0,0,0.25)"></div>
<div class="a" style="left:2044.7px;top:175.6px;width:10px;height:36px;border-radius:3px;background:#4876a8"></div>
<!-- MAIN CARD -->
<div id="mcard" class="a">
 <div id="inner" class="a"></div>
<div class="a" style="left:1628px;top:175.8px;width:30px;height:48px;border-radius:6px;background:#fff;box-shadow:-1px 0 2px rgba(0,0,0,0.2)"></div>
<div class="a" style="left:1634px;top:182.2px;width:20px;height:35.4px;border-radius:2px;background:#a9bfcc"></div>
<svg class="a" style="left:1639px;top:191px" width="12" height="19" viewBox="0 0 12 19"><defs><linearGradient id="trg" x1="0" y1="0" x2="1" y2="1"><stop offset="0" stop-color="#fff"/><stop offset="1" stop-color="#d9e2e8"/></linearGradient></defs><polygon points="1,9.2 11,1.5 11,17" fill="url(#trg)"/></svg>
<div class="a" style="left:1649px;top:0;width:19px;height:867px;background:#fff;border-left:1px solid #e3e3e3"></div>
</div>
<div class="btn" style="left:1816px;top:301.5px;width:73px;height:31.5px"></div>
<div class="t" style="left:1822.3px;top:310.18px;font-size:14.44px;font-weight:700;color:#333">Previous</div>
<div class="btn" style="left:1897.5px;top:301.5px;width:50.5px;height:31.5px"></div>
<div class="t" style="left:1907.2px;top:310.45px;font-size:14.12px;font-weight:700;color:#333">Next</div>
<div class="t" style="left:1960px;top:310.27px;font-size:14.33px;color:#2a5db0">Cancel</div>
<div class="a" style="left:395px;top:346px;width:1629px;height:1px;background:#dcdcdc"></div>
<div class="t" style="left:409.7px;top:365.33px;font-size:17.68px;color:#333">The approval page is where an approver will actually approve or reject a request. Using the options below, choose the fields to display on this page.</div>
<div class="a" style="left:395px;top:398px;width:1629px;height:1px;background:#dcdcdc"></div>

<div class="t" style="left:501.70px;top:431.23px;font-size:16.15px;font-weight:700;color:#000">Available Fields</div>
<div class="lbox" style="left:444.2px;top:458.3px;width:232.3px;height:343.3px">
 <div class="a" style="left:217.3px;top:52.9px;width:9.5px;height:200.8px;background:#808080;border-radius:5px"></div>
<div class="opt" style="top:-7.80px">Contract</div><div class="opt" style="top:16.46px">Created By</div><div class="opt" style="top:40.72px">Current Generator(s)</div><div class="opt" style="top:64.98px">Delivery/Installation Status</div><div class="opt" style="top:89.24px">Description</div><div class="opt" style="top:113.50px">Expected Revenue</div><div class="opt" style="top:137.76px">Forecast Category</div><div class="opt" style="top:162.02px">Last Modified By</div><div class="opt" style="top:186.28px">Lead Source</div><div class="opt" style="top:210.54px">Main Competitor(s)</div><div class="opt" style="top:234.80px">Next Step</div><div class="opt" style="top:259.06px">Order Number</div><div class="opt" style="top:283.32px">Price Book</div><div class="opt" style="top:307.58px">Primary Campaign Source</div><div class="opt" style="top:331.84px">Private</div></div>
<div class="a" style="left:748px;top:424px;width:4.2px;height:32.5px;background:#c4201e"></div>
<div class="t" style="left:790.20px;top:431.15px;font-size:16.12px;font-weight:700;color:#000">Selected Fields</div>
<div class="lbox" style="left:754.3px;top:458.2px;width:184.9px;height:343.3px">
 <div class="a" style="left:0;top:73.1px;width:100%;height:23.8px;background:#cecece"></div><div class="opt" style="top:2.40px">Opportunity Name</div><div class="opt" style="top:26.66px">Opportunity Owner</div><div class="opt" style="top:50.92px">Amount</div><div class="opt" style="top:75.18px">Discount Percentage</div>
</div>

<div class="t" style="left:703.60px;top:562.58px;font-size:15.62px;color:#000">Add</div>
<div class="btn" style="left:700.2px;top:583.3px;width:33.6px;height:28.5px;border-radius:5px"></div>
<svg class="a" style="left:713px;top:589px" width="10" height="17" viewBox="0 0 10 17"><polygon points="1,1.3 8.8,8.5 1,15.7" fill="#333"/></svg>
<div class="btn" style="left:700.2px;top:615px;width:33.6px;height:28.5px;border-radius:5px"></div>
<svg class="a" style="left:713px;top:621px" width="10" height="17" viewBox="0 0 10 17"><polygon points="8.8,1.3 1,8.5 8.8,15.7" fill="#333"/></svg>
<div class="t" style="left:688.40px;top:647.44px;font-size:15.9px;color:#000">Remove</div>

<div class="t" style="left:960.70px;top:561.06px;font-size:15.64px;color:#000">Up</div>
<div class="btn" style="left:953px;top:581.2px;width:34.4px;height:28.2px;border-radius:5px"></div>
<svg class="a" style="left:962px;top:590px" width="17" height="10" viewBox="0 0 17 10"><polygon points="1,8.5 8.3,1 15.6,8.5" fill="#333"/></svg>
<div class="btn" style="left:953px;top:613.5px;width:34.4px;height:28.2px;border-radius:5px"></div>
<svg class="a" style="left:962px;top:623px" width="17" height="10" viewBox="0 0 17 10"><polygon points="1,1.3 8.3,8.8 15.6,1.3" fill="#333"/></svg>
<div class="t" style="left:950.50px;top:647.49px;font-size:15.84px;color:#000">Down</div>

<!-- example image -->
<div class="a" id="ex" style="left:1145px;top:507.5px;width:215px;height:157px;background:#f8f8f8;overflow:hidden;filter:blur(0.45px)"><div class="a" style="left:0.0px;top:0.0px;width:215.0px;height:156.5px;background:#fafbfb;"></div><div class="a" style="left:0.0px;top:0.0px;width:215.0px;height:7.0px;background:#e6ecee;"></div><div class="a" style="left:5.0px;top:2.5px;width:8.0px;height:2.0px;background:#7b8a8f;"></div><div class="a" style="left:17.0px;top:2.5px;width:9.0px;height:2.0px;background:#7b8a8f;"></div><div class="a" style="left:30.0px;top:2.5px;width:8.0px;height:2.0px;background:#7b8a8f;"></div><div class="a" style="left:42.0px;top:2.5px;width:11.0px;height:2.0px;background:#7b8a8f;"></div><div class="a" style="left:58.0px;top:2.5px;width:10.0px;height:2.0px;background:#7b8a8f;"></div><div class="a" style="left:73.0px;top:2.5px;width:17.0px;height:2.0px;background:#7b8a8f;"></div><div class="a" style="left:95.0px;top:2.5px;width:10.0px;height:2.0px;background:#7b8a8f;"></div><div class="a" style="left:109.0px;top:2.5px;width:15.0px;height:2.0px;background:#7b8a8f;"></div><div class="a" style="left:129.0px;top:2.5px;width:14.0px;height:2.0px;background:#7b8a8f;"></div><div class="a" style="left:147.0px;top:2.5px;width:11.0px;height:2.0px;background:#7b8a8f;"></div><div class="a" style="left:162.0px;top:2.5px;width:12.0px;height:2.0px;background:#7b8a8f;"></div><div class="a" style="left:206.0px;top:2.5px;width:4.0px;height:2.0px;background:#7b8a8f;"></div><div class="a" style="left:177.7px;top:1.0px;width:25.3px;height:6.2px;background:#3a8b7c;border-radius:2px 2px 0 0"></div><div class="a" style="left:181.0px;top:3.0px;width:19.0px;height:1.8px;background:#cfe6e0;"></div><div class="a" style="left:0.0px;top:6.5px;width:215.0px;height:1.2px;background:#5c9e90;"></div><div class="a" style="left:0.0px;top:6.5px;width:2.0px;height:150.0px;background:#5f93c6;"></div><div class="a" style="left:212.8px;top:6.5px;width:2.2px;height:150.0px;background:#5f93c6;"></div><div class="a" style="left:4.0px;top:10.5px;width:40.5px;height:5.0px;background:#4a92cb;border-radius:2px"></div><div class="a" style="left:6.0px;top:12.3px;width:11.0px;height:1.4px;background:#d8e8f4;"></div><div class="a" style="left:4.0px;top:20.5px;width:41.0px;height:5.5px;background:#3d86c2;border-radius:2px 2px 0 0"></div><div class="a" style="left:6.0px;top:22.5px;width:13.0px;height:1.6px;background:#d0e2f0;"></div><div class="a" style="left:4.0px;top:26.0px;width:41.0px;height:43.1px;background:#d5e9f6;"></div><div class="a" style="left:5.3px;top:28.7px;width:1.5px;height:1.8px;background:#8aa3b0;"></div><div class="a" style="left:10.0px;top:28.9px;width:18.0px;height:1.4px;background:#6b767d;"></div><div class="a" style="left:5.3px;top:33.2px;width:1.5px;height:1.8px;background:#3d7cc0;"></div><div class="a" style="left:10.0px;top:33.5px;width:17.0px;height:1.4px;background:#6b767d;"></div><div class="a" style="left:5.3px;top:37.8px;width:1.5px;height:1.8px;background:#3d7cc0;"></div><div class="a" style="left:10.0px;top:38.0px;width:16.0px;height:1.4px;background:#6b767d;"></div><div class="a" style="left:5.3px;top:42.4px;width:1.5px;height:1.8px;background:#3d7cc0;"></div><div class="a" style="left:10.0px;top:42.6px;width:14.0px;height:1.4px;background:#6b767d;"></div><div class="a" style="left:5.3px;top:46.9px;width:1.5px;height:1.8px;background:#8aa3b0;"></div><div class="a" style="left:10.0px;top:47.1px;width:24.0px;height:1.4px;background:#6b767d;"></div><div class="a" style="left:5.3px;top:51.5px;width:1.5px;height:1.8px;background:#8aa3b0;"></div><div class="a" style="left:10.0px;top:51.7px;width:17.0px;height:1.4px;background:#6b767d;"></div><div class="a" style="left:5.3px;top:56.0px;width:1.5px;height:1.8px;background:#e59a2f;"></div><div class="a" style="left:10.0px;top:56.2px;width:7.0px;height:1.4px;background:#6b767d;"></div><div class="a" style="left:5.3px;top:60.6px;width:1.5px;height:1.8px;background:#3d7cc0;"></div><div class="a" style="left:10.0px;top:60.8px;width:16.0px;height:1.4px;background:#6b767d;"></div><div class="a" style="left:5.3px;top:65.1px;width:1.5px;height:1.8px;background:#3d7cc0;"></div><div class="a" style="left:10.0px;top:65.3px;width:14.0px;height:1.4px;background:#6b767d;"></div><div class="a" style="left:4.0px;top:75.3px;width:41.0px;height:5.2px;background:#def6d6;"></div><div class="a" style="left:5.5px;top:76.5px;width:2.0px;height:3.0px;background:#2f7a2a;"></div><div class="a" style="left:9.0px;top:77.5px;width:16.0px;height:1.5px;background:#4f7a4a;"></div><div class="a" style="left:48.0px;top:13.5px;width:4.0px;height:4.0px;background:#f0b030;border-radius:1px"></div><div class="a" style="left:56.0px;top:11.3px;width:20.0px;height:1.2px;background:#9aa2a6;"></div><div class="a" style="left:54.5px;top:12.8px;white-space:nowrap;font-size:6.4px;line-height:7px;color:#2a2f33;font-family:'Liberation Sans',sans-serif">Expense Report ER2010-0001</div><div class="a" style="left:48.0px;top:20.5px;width:48.0px;height:1.3px;background:#7aa6d6;"></div><div class="a" style="left:186.0px;top:11.8px;width:17.0px;height:1.4px;background:#7aa6d6;"></div><div class="a" style="left:203.8px;top:11.3px;width:3.2px;height:3.2px;background:#f0a040;border-radius:50%"></div><div class="a" style="left:47.5px;top:25.3px;width:161.0px;height:1.2px;background:#8fc3b8;"></div><div class="a" style="left:47.5px;top:26.5px;width:161.0px;height:7.5px;background:#f2f2f2;"></div><div class="a" style="left:50.0px;top:29.2px;width:50.0px;height:1.7px;background:#4a4a4a;"></div><div class="a" style="left:47.5px;top:34.0px;width:161.0px;height:62.5px;background:#f6f6f6;"></div><div class="a" style="left:54.0px;top:35.9px;width:20.0px;height:1.2px;background:#9aa0a4;"></div><div class="a" style="left:78.0px;top:35.8px;width:14.0px;height:1.4px;background:#70757a;"></div><div class="a" style="left:66.0px;top:40.4px;width:8.0px;height:1.2px;background:#9aa0a4;"></div><div class="a" style="left:78.0px;top:40.3px;width:15.0px;height:1.4px;background:#70757a;"></div><div class="a" style="left:54.0px;top:44.4px;width:20.0px;height:1.2px;background:#9aa0a4;"></div><div class="a" style="left:78.0px;top:44.3px;width:12.0px;height:1.4px;background:#70757a;"></div><div class="a" style="left:67.0px;top:48.9px;width:7.0px;height:1.2px;background:#9aa0a4;"></div><div class="a" style="left:78.0px;top:48.8px;width:26.0px;height:1.4px;background:#70757a;"></div><div class="a" style="left:50.0px;top:53.4px;width:24.0px;height:1.2px;background:#9aa0a4;"></div><div class="a" style="left:78.0px;top:53.3px;width:26.0px;height:1.4px;background:#70757a;"></div><div class="a" style="left:61.0px;top:57.4px;width:13.0px;height:1.2px;background:#9aa0a4;"></div><div class="a" style="left:78.0px;top:57.3px;width:105.0px;height:1.4px;background:#70757a;"></div><div class="a" style="left:78.0px;top:60.7px;width:39.0px;height:1.2px;background:#70757a;"></div><div class="a" style="left:67.0px;top:64.0px;width:7.0px;height:1.2px;background:#9aa0a4;"></div><div class="a" style="left:78.0px;top:64.0px;width:114.0px;height:20.1px;background:#ffffff;border:1px solid #dcdcdc;box-sizing:border-box"></div><div class="a" style="left:99.0px;top:91.3px;width:11.0px;height:3.4px;background:#ececec;border:0.6px solid #b8b8b8;box-sizing:border-box"></div><div class="a" style="left:101.0px;top:92.7px;width:7.0px;height:0.8px;background:#555;"></div><div class="a" style="left:113.0px;top:91.3px;width:9.0px;height:3.4px;background:#ececec;border:0.6px solid #b8b8b8;box-sizing:border-box"></div><div class="a" style="left:115.0px;top:92.7px;width:5.0px;height:0.8px;background:#555;"></div><div class="a" style="left:125.0px;top:91.3px;width:10.0px;height:3.4px;background:#ececec;border:0.6px solid #b8b8b8;box-sizing:border-box"></div><div class="a" style="left:127.0px;top:92.7px;width:6.0px;height:0.8px;background:#555;"></div><div class="a" style="left:47.5px;top:98.1px;width:161.0px;height:1.4px;background:#78b3a9;"></div><div class="a" style="left:48.0px;top:101.0px;width:25.0px;height:1.7px;background:#4a4a4a;"></div><div class="a" style="left:180.0px;top:101.3px;width:18.0px;height:1.2px;background:#7aa6d6;"></div><div class="a" style="left:49.0px;top:105.1px;width:158.0px;height:47.9px;background:#ffffff;border:0.5px solid #e0e0e0;box-sizing:border-box"></div><div class="a" style="left:49.0px;top:106.1px;width:158.0px;height:3.9px;background:#e3f3fb;"></div><div class="a" style="left:50.0px;top:107.5px;width:4.0px;height:1.2px;background:#7d8a90;"></div><div class="a" style="left:87.0px;top:107.5px;width:15.0px;height:1.2px;background:#7d8a90;"></div><div class="a" style="left:104.0px;top:107.5px;width:18.0px;height:1.2px;background:#7d8a90;"></div><div class="a" style="left:125.0px;top:107.5px;width:6.0px;height:1.2px;background:#7d8a90;"></div><div class="a" style="left:137.0px;top:107.5px;width:14.0px;height:1.2px;background:#7d8a90;"></div><div class="a" style="left:191.0px;top:107.5px;width:15.0px;height:1.2px;background:#7d8a90;"></div><div class="a" style="left:49.0px;top:110.9px;width:158.0px;height:7.0px;background:#6ba9a1;"></div><div class="a" style="left:51.0px;top:112.5px;width:28.0px;height:1.2px;background:#e8f4f2;"></div><div class="a" style="left:51.0px;top:115.1px;width:31.0px;height:1.2px;background:#e8f4f2;"></div><div class="a" style="left:190.0px;top:112.5px;width:17.0px;height:4.0px;background:#e5c43a;"></div><div class="a" style="left:191.0px;top:113.5px;width:2.5px;height:2.0px;background:#e07a20;"></div><div class="a" style="left:50.0px;top:121.7px;width:23.0px;height:1.2px;background:#8a9094;"></div><div class="a" style="left:87.0px;top:121.7px;width:9.0px;height:1.2px;background:#666;"></div><div class="a" style="left:104.0px;top:121.7px;width:17.0px;height:1.2px;background:#666;"></div><div class="a" style="left:125.0px;top:121.7px;width:9.0px;height:1.2px;background:#666;"></div><div class="a" style="left:49.0px;top:127.2px;width:158.0px;height:3.9px;background:#6ba9a1;"></div><div class="a" style="left:51.0px;top:128.5px;width:27.0px;height:1.3px;background:#e8f4f2;"></div><div class="a" style="left:189.0px;top:127.2px;width:18.0px;height:3.9px;background:#8fd56e;"></div><div class="a" style="left:194.0px;top:128.5px;width:11.0px;height:1.3px;background:#2f5a2a;"></div><div class="a" style="left:50.0px;top:135.5px;width:23.0px;height:1.2px;background:#8a9094;"></div><div class="a" style="left:87.0px;top:135.5px;width:11.0px;height:1.2px;background:#666;"></div><div class="a" style="left:104.0px;top:135.5px;width:17.0px;height:1.2px;background:#555;"></div><div class="a" style="left:125.0px;top:135.5px;width:10.0px;height:1.2px;background:#666;"></div><div class="a" style="left:137.0px;top:135.5px;width:51.0px;height:1.2px;background:#8a9094;"></div><div class="a" style="left:49.0px;top:139.9px;width:158.0px;height:4.4px;background:#6ba9a1;"></div><div class="a" style="left:51.0px;top:141.4px;width:33.0px;height:1.3px;background:#e8f4f2;"></div><div class="a" style="left:50.0px;top:148.0px;width:23.0px;height:1.2px;background:#8a9094;"></div><div class="a" style="left:87.0px;top:148.0px;width:9.0px;height:1.2px;background:#666;"></div><div class="a" style="left:104.0px;top:148.0px;width:17.0px;height:1.2px;background:#666;"></div><div class="a" style="left:125.0px;top:148.0px;width:11.0px;height:1.2px;background:#666;"></div></div>
<div class="t" style="left:1145.00px;top:698.80px;font-size:16.19px;color:#222;text-decoration:underline;text-decoration-thickness:1.6px;text-underline-offset:1.5px">Click here to view an example</div>

<div class="a" style="left:395px;top:866px;width:1629px;height:31.4px;background:#e3e6ee"></div>
<div class="t" style="left:412.50px;top:873.78px;font-size:17.63px;font-weight:700;color:#000">Approval Page Fields</div>
<div class="a" style="left:441px;top:919.2px;width:18.3px;height:18.5px;background:#3b7ced;border-radius:3px"></div>
<svg class="a" style="left:441px;top:919.2px" width="19" height="19" viewBox="0 0 19 19"><polyline points="3.6,9.9 7.4,14.1 14.7,3.9" fill="none" stroke="#fff" stroke-width="3"/></svg>
<div class="t" style="left:464.00px;top:918.37px;font-size:16.22px;color:#000">Display approval history information in addition to the fields selected above.</div>
<div class="a" style="left:395px;top:965px;width:1629px;height:31px;background:#e3e6ee"></div>
<div class="t" style="left:412.50px;top:971.78px;font-size:17.63px;font-weight:700;color:#000">Security Settings</div>
<svg class="a" style="left:434px;top:1015px" width="21" height="42" viewBox="0 0 21 42">
 <circle cx="10.5" cy="10" r="8.6" fill="#fff" stroke="#3b7ced" stroke-width="1.8"/><circle cx="10.5" cy="10" r="5.6" fill="#3b7ced"/>
 <circle cx="10.5" cy="30" r="8.6" fill="#fff" stroke="#7a7a7a" stroke-width="1.5"/>
</svg>
<div class="t" style="left:462.30px;top:1014.34px;font-size:16.25px;color:#000">Allow approvers to access the approval page only from within the Salesforce application. (Recommended)</div>
<div class="t" style="left:462.30px;top:1035.04px;font-size:16.25px;color:#000">Allow approvers to access the approval page from within the Salesforce application, or externally from a wireless-enabled mobile device.</div>
<div class="a" style="left:1448.2px;top:1039.2px;width:20.3px;height:20.3px;border:1px solid #c5c5c5;border-radius:3px;background:linear-gradient(#fff,#e9edf2)"></div>
<div class="t" style="left:1454px;top:1043.30px;font-family:'Liberation Serif',serif;font-weight:700;font-size:15px;color:#3b73d0">i</div>
<div class="a" style="left:395px;top:1117px;width:1629px;height:1px;background:#dcdcdc"></div>
<div class="a" style="left:375px;top:1100px;width:1668px;height:53px;overflow:hidden;border-radius:0 0 5px 5px">
 <div class="btn" style="left:1441px;top:32.7px;width:73px;height:31.5px"></div>
 <div class="t" style="left:1447.3px;top:41.08px;font-size:14.44px;font-weight:700;color:#333">Previous</div>
 <div class="btn" style="left:1522.5px;top:32.7px;width:50.5px;height:31.5px"></div>
 <div class="t" style="left:1532.2px;top:41.35px;font-size:14.12px;font-weight:700;color:#333">Next</div>
 <div class="t" style="left:1585px;top:41.17px;font-size:14.33px;color:#2a5db0">Cancel</div>
</div>
</body></html>
